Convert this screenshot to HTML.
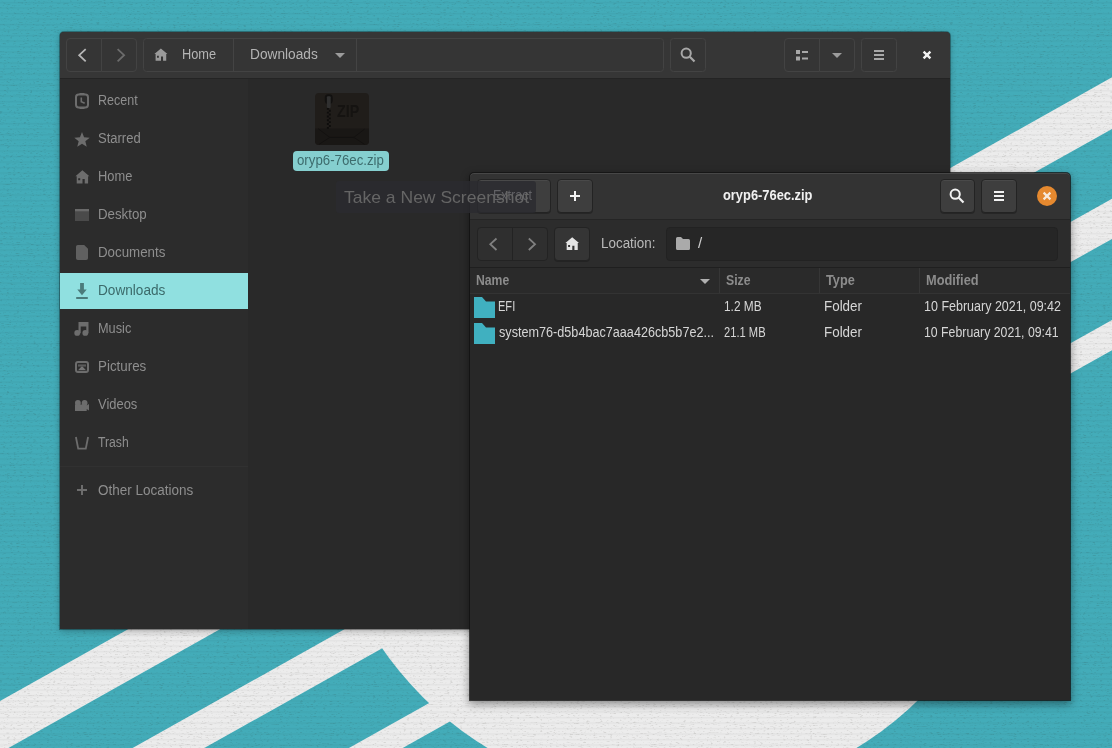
<!DOCTYPE html>
<html lang="en">
<head>
<meta charset="utf-8">
<title>Files - Downloads</title>
<style>
*{box-sizing:border-box;margin:0;padding:0}
html,body{width:1112px;height:748px;overflow:hidden;background:#42abb8;font-family:"Liberation Sans",sans-serif;font-size:14px}
.abs,.tx,.btn,.ic{position:absolute}
.tx{white-space:nowrap;line-height:1;transform-origin:0 0;font-size:14px}
#wall{position:absolute;left:0;top:0}
.win{position:absolute;overflow:hidden}
.pg{position:absolute;width:1112px;height:748px}
#w1{left:60px;top:32px;width:890px;height:597px;border-radius:4px 4px 0 0;background:#292929;box-shadow:0 0 0 1px rgba(0,0,0,.3),0 2px 6px rgba(0,0,0,.3)}
#w1 .pg{left:-60px;top:-32px}
#w2{left:470px;top:173px;width:600px;height:527px;border-radius:4px 4px 0 0;background:#282828;box-shadow:0 0 0 1px rgba(18,18,18,.75),0 3px 9px 1px rgba(0,0,0,.42)}
#w2 .pg{left:-470px;top:-173px}
.hb1{left:60px;top:32px;width:890px;height:46px;background:#363636}
.hl1{left:60px;top:78px;width:890px;height:1px;background:#242424}
.side{left:60px;top:79px;width:188px;height:550px;background:#2c2c2c}
.b1{border:1px solid #434343;border-radius:3.5px;background:#353535}
.sel{left:60px;top:273px;width:188px;height:36px;background:#90e0e0}
.sb{color:#8e8e8e}
.hb2{left:470px;top:173px;width:600px;height:46px;background:#333333;box-shadow:inset 0 1px 0 rgba(255,255,255,.1);border-radius:4px 4px 0 0}
.hl2{left:470px;top:219px;width:600px;height:1px;background:#252525}
.tb2{left:470px;top:220px;width:600px;height:47px;background:#2c2c2c}
.b2{border:1px solid #232323;border-radius:4px;background:#3e3e3e;box-shadow:inset 0 1px 0 rgba(255,255,255,.06),0 1px 0 rgba(0,0,0,.25)}
.b3{border:1px solid #232323;border-radius:4px;background:#2f2f2f}
svg{display:block;overflow:visible}
</style>
</head>
<body>
<svg id="wall" width="1112" height="748" viewBox="0 0 1112 748">
  <defs>
    <filter id="tex" x="0" y="0" width="100%" height="100%" color-interpolation-filters="sRGB">
      <feTurbulence type="fractalNoise" baseFrequency="0.3 0.9" numOctaves="2" seed="7"/>
      <feColorMatrix type="matrix" values="0 0 0 0 0.16  0 0 0 0 0.14  0 0 0 0 0.10  0 0 0 -4 1.7"/>
    </filter>
    <pattern id="rows" width="1112" height="5.500" patternUnits="userSpaceOnUse">
      <rect y="2" width="1112" height="1.200" fill="#1a1a10" opacity=".05"/>
    </pattern>
  </defs>
  <rect width="1112" height="748" fill="#43acb9"/>
  <g fill="#ececec">
    <circle cx="672" cy="447.600" r="352.600"/>
    <polygon points="1112,77.300 1112,129 0,752.700 0,701"/>
    <polygon points="1112,198.700 1112,238.900 0,862.600 0,822.400"/>
    <polygon points="1112,320 1112,350.200 0,973.900 0,943.700"/>
  </g>
  <rect width="1112" height="748" fill="url(#rows)"/>
  <rect width="1112" height="748" filter="url(#tex)" opacity=".11"/>
</svg>

<!-- ================= Files window ================= -->
<div class="win" id="w1"><div class="pg">
  <div class="abs hb1"></div><div class="abs hl1"></div>
  <div class="abs side"></div>

  <!-- nav buttons -->
  <div class="btn b1" style="left:66px;top:38px;width:36px;height:34px;border-radius:4px 0 0 4px"></div>
  <div class="btn b1" style="left:101px;top:38px;width:36px;height:34px;border-radius:0 4px 4px 0"></div>
  <svg class="ic" style="left:76px;top:47px" width="14" height="16" viewBox="0 0 14 16"><path d="M9.700 2.200 3.200 8.200 9.700 14.300" fill="none" stroke="#b6b6b6" stroke-width="1.800"/></svg>
  <svg class="ic" style="left:113px;top:47px" width="14" height="16" viewBox="0 0 14 16"><path d="M4.600 2.200 11.100 8.200 4.600 14.300" fill="none" stroke="#6c6c6c" stroke-width="1.800"/></svg>

  <!-- path bar -->
  <div class="btn b1" style="left:143px;top:38px;width:521px;height:34px"></div>
  <div class="abs" style="left:233px;top:39px;width:1px;height:32px;background:#444"></div>
  <div class="abs" style="left:356px;top:39px;width:1px;height:32px;background:#444"></div>
  <svg class="ic" style="left:153.500px;top:47.700px" width="14" height="13.500" viewBox="0 0 15 14"><path fill-rule="evenodd" d="M7.400.2l7 6h-1.300v7.300H9.700V8.900H7.500v4.600H1.700V6.200H.4zM3.200 8.200v2h2v-2z" fill="#9a9a9a"/></svg>
  <span class="tx" style="left:181.8px;top:46.9px;color:#b4b4b4;transform:scaleX(0.9128)">Home</span>
  <span class="tx" style="left:249.5px;top:46.9px;color:#b4b4b4;transform:scaleX(0.9788)">Downloads</span>
  <svg class="ic" style="left:335px;top:53px" width="10" height="5" viewBox="0 0 10 5"><path d="M0 0h10L5 5z" fill="#9c9c9c"/></svg>

  <!-- search -->
  <div class="btn b1" style="left:670px;top:38px;width:36px;height:34px"></div>
  <svg class="ic" style="left:680.400px;top:47.300px" width="16" height="16" viewBox="0 0 16 16"><circle cx="6.2" cy="6.2" r="4.6" fill="none" stroke="#a8a8a8" stroke-width="2"/><path d="M9.8 9.8 14.5 14.5" stroke="#a8a8a8" stroke-width="2.2"/></svg>

  <!-- view -->
  <div class="btn b1" style="left:784px;top:38px;width:36px;height:34px;border-radius:4px 0 0 4px"></div>
  <div class="btn b1" style="left:819px;top:38px;width:36px;height:34px;border-radius:0 4px 4px 0"></div>
  <svg class="ic" style="left:796px;top:49.800px" width="12" height="11" viewBox="0 0 12 11"><path d="M0 0h4v4H0zM6 1h6v2H6zM0 6.500h4v4H0zM6 7.500h6v2H6z" fill="#a8a8a8"/></svg>
  <svg class="ic" style="left:832px;top:53px" width="10" height="5" viewBox="0 0 10 5"><path d="M0 0h10L5 5z" fill="#9c9c9c"/></svg>

  <!-- menu -->
  <div class="btn b1" style="left:861px;top:38px;width:36px;height:34px"></div>
  <svg class="ic" style="left:874px;top:50px" width="10" height="10" viewBox="0 0 10 10"><path d="M0 0h10v2H0zM0 4h10v2H0zM0 8h10v2H0z" fill="#a8a8a8"/></svg>

  <!-- close -->
  <svg class="ic" style="left:922.300px;top:50.400px" width="10" height="10" viewBox="0 0 10 10"><path d="M1.600 1.600 8.400 8.400M8.400 1.600 1.600 8.400" stroke="#f2f2f2" stroke-width="2.400"/></svg>

  <!-- sidebar -->
  <div class="abs sel"></div>
  <div class="abs" style="left:60px;top:466px;width:188px;height:1px;background:#313131"></div>


  <!-- sidebar icons -->
  <svg class="ic" style="left:74px;top:92px" width="16" height="18" viewBox="0 0 16 18" fill="none" stroke="#6d6d6d">
    <rect x="2" y="2.600" width="12" height="12.800" rx="2.600" stroke-width="2"/><path d="M5.500 1.700h5M5.500 16.300h5" stroke-width="1.400"/><path d="M7.300 5.400v4.300l3.400 1.500" stroke-width="1.600"/></svg>
  <svg class="ic" style="left:74px;top:132px" width="16" height="15" viewBox="0 0 16 15"><path d="M8 0l2.050 5.300 5.650.35-4.380 3.600 1.430 5.500L8 11.700l-4.750 3.050 1.430-5.500L.3 5.650l5.650-.35z" fill="#6d6d6d"/></svg>
  <svg class="ic" style="left:75px;top:169.500px" width="15" height="14" viewBox="0 0 15 14"><path fill-rule="evenodd" d="M7.400.2l7 6h-1.300v7.300H9.700V8.900H7.500v4.600H1.700V6.200H.4zM3.200 8.200v2h2v-2z" fill="#6d6d6d"/></svg>
  <svg class="ic" style="left:75px;top:209px" width="14" height="12" viewBox="0 0 14 12"><rect width="14" height="12" fill="#4a4a4a"/><rect width="14" height="2.300" fill="#6a6a6a"/></svg>
  <svg class="ic" style="left:76px;top:245px" width="12" height="15" viewBox="0 0 12 15"><path d="M1.800 0h6.400L12 3.800v9.400a1.800 1.800 0 0 1-1.800 1.800H1.800A1.800 1.800 0 0 1 0 13.200V1.800A1.800 1.800 0 0 1 1.800 0z" fill="#606060"/></svg>
  <svg class="ic" style="left:76px;top:283px" width="12" height="16" viewBox="0 0 12 16"><path d="M4.100 0h3.800v6.400h2.800L6 12.200 1.300 6.400h2.800zM.2 13.900h11.600V16H.2z" fill="#4b7b7b"/></svg>
  <svg class="ic" style="left:74px;top:321.700px" width="15" height="14" viewBox="0 0 15 14"><path d="M4.500 0h10v11.200h-2.200V4.400H6.700v6.800H4.500z" fill="#6d6d6d"/><circle cx="3.200" cy="10.900" r="2.900" fill="#6d6d6d"/><circle cx="11.300" cy="10.900" r="2.900" fill="#6d6d6d"/></svg>
  <svg class="ic" style="left:75px;top:361px" width="14" height="12" viewBox="0 0 14 12"><rect x="1" y="1" width="12" height="10" rx="2" fill="none" stroke="#6d6d6d" stroke-width="2"/><path d="M3 9.200l4-4.200 4 4.200z" fill="#757575"/><path d="M3 3.400h8v2.200H3z" fill="#5a5a5a"/></svg>
  <svg class="ic" style="left:75px;top:400px" width="14" height="11" viewBox="0 0 14 11"><circle cx="2.900" cy="2.900" r="2.900" fill="#6d6d6d"/><circle cx="9.600" cy="2.900" r="2.900" fill="#6d6d6d"/><path d="M0 4.600h11.700v1L14 4v6.600l-2.300-1.600V11H0z" fill="#6d6d6d"/></svg>
  <svg class="ic" style="left:75px;top:437px" width="14" height="13" viewBox="0 0 14 13"><path d="M.9 0l2.300 11.700h7.600L13.100 0" fill="none" stroke="#6d6d6d" stroke-width="1.800"/></svg>
  <svg class="ic" style="left:77px;top:485px" width="10" height="10" viewBox="0 0 10 10"><path d="M5 0v10M0 5h10" stroke="#6d6d6d" stroke-width="2"/></svg>

  <span class="tx sb" style="left:97.7px;top:93.2px;transform:scaleX(0.8950)">Recent</span>
  <span class="tx sb" style="left:97.7px;top:131.2px;transform:scaleX(0.9298)">Starred</span>
  <span class="tx sb" style="left:97.7px;top:169.2px;transform:scaleX(0.9181)">Home</span>
  <span class="tx sb" style="left:97.7px;top:207.2px;transform:scaleX(0.9482)">Desktop</span>
  <span class="tx sb" style="left:97.7px;top:245.2px;transform:scaleX(0.9518)">Documents</span>
  <span class="tx" style="left:97.7px;top:283.2px;color:#3b6a6a;transform:scaleX(0.9731)">Downloads</span>
  <span class="tx sb" style="left:97.7px;top:321.2px;transform:scaleX(0.9108)">Music</span>
  <span class="tx sb" style="left:97.7px;top:359.2px;transform:scaleX(0.9550)">Pictures</span>
  <span class="tx sb" style="left:97.7px;top:397.2px;transform:scaleX(0.9233)">Videos</span>
  <span class="tx sb" style="left:97.7px;top:435.2px;transform:scaleX(0.8702)">Trash</span>
  <span class="tx sb" style="left:97.7px;top:482.5px;transform:scaleX(0.9641)">Other Locations</span>

  <!-- file -->
  <svg class="ic" style="left:315px;top:93px" width="54" height="52" viewBox="0 0 54 52">
    <rect width="54" height="52" rx="4" fill="#201d1a"/>
    <path d="M0 35.600h54V48a4 4 0 0 1-4 4H4a4 4 0 0 1-4-4z" fill="#191715"/>
    <path d="M3.200 35.700l11.600 8.700h24l10.800-8.300M14.800 44.400L4 51.400M38.800 44.400l10.800 7" fill="none" stroke="#131110" stroke-width="1"/>
    <rect x="9.800" y="1.200" width="7.900" height="9.800" rx="3.400" fill="#121110"/>
    <rect x="11.900" y="3.300" width="3.800" height="11.600" rx="1" fill="#303030"/>
    <path d="M11.90 14.90h1.95v1.9h-1.95zM13.85 16.80h1.95v1.9h-1.95zM11.90 18.70h1.95v1.9h-1.95zM13.85 20.60h1.95v1.9h-1.95zM11.90 22.50h1.95v1.9h-1.95zM13.85 24.40h1.95v1.9h-1.95zM11.90 26.30h1.95v1.9h-1.95zM13.85 28.20h1.95v1.9h-1.95zM11.90 30.10h1.95v1.9h-1.95zM13.85 32.00h1.95v1.9h-1.95zM11.90 33.90h1.95v1.9h-1.95z" fill="#0e0d0c"/>
  </svg>
  <span class="tx" style="left:337.0px;top:103.000px;font-size:16.500px;font-weight:700;color:#151311;transform:scaleX(0.8648)">ZIP</span>
  <div class="abs" style="left:293px;top:151px;width:96px;height:20px;border-radius:4px;background:#85cfcf"></div>
  <span class="tx" style="left:296.6px;top:152.900px;color:#3d6c6d;transform:scaleX(0.9463)">oryp6-76ec.zip</span>
</div></div>

<!-- ================= Archive Manager window ================= -->
<div class="win" id="w2"><div class="pg">
  <div class="abs hb2"></div><div class="abs hl2"></div><div class="abs tb2"></div>

  <div class="btn b2" style="left:477px;top:179px;width:74px;height:34px"></div>
  <span class="tx" style="left:493.2px;top:187.800px;color:#626266;z-index:3;transform:scaleX(0.8949)">Extract</span>
  <div class="btn b2" style="left:557px;top:179px;width:36px;height:34px"></div>
  <svg class="ic" style="left:570px;top:191px" width="10" height="10" viewBox="0 0 10 10"><path d="M5 0v10M0 5h10" stroke="#f2f2f2" stroke-width="2"/></svg>

  <span class="tx" style="left:723.2px;top:187.6px;color:#f0f0f0;font-weight:700;transform:scaleX(0.9191)">oryp6-76ec.zip</span>

  <div class="btn b2" style="left:939.500px;top:179px;width:35.500px;height:34px"></div>
  <svg class="ic" style="left:949px;top:188px" width="16" height="16" viewBox="0 0 16 16"><circle cx="6.2" cy="6.2" r="4.6" fill="none" stroke="#f2f2f2" stroke-width="2"/><path d="M9.8 9.8 14.5 14.5" stroke="#f2f2f2" stroke-width="2.2"/></svg>
  <div class="btn b2" style="left:981px;top:179px;width:36px;height:34px"></div>
  <svg class="ic" style="left:994px;top:191px" width="10" height="10" viewBox="0 0 10 10"><path d="M0 0h10v2H0zM0 4h10v2H0zM0 8h10v2H0z" fill="#f2f2f2"/></svg>
  <div class="abs" style="left:1037px;top:186px;width:20px;height:20px;border-radius:50%;background:#e5892f"></div>
  <svg class="ic" style="left:1042px;top:191px" width="10" height="10" viewBox="0 0 10 10"><path d="M1.600 1.600 8.400 8.400M8.400 1.600 1.600 8.400" stroke="#f7e9da" stroke-width="2.200"/></svg>

  <!-- toolbar -->
  <div class="btn b3" style="left:477px;top:227px;width:36px;height:34px;border-radius:4px 0 0 4px"></div>
  <div class="btn b3" style="left:512px;top:227px;width:36px;height:34px;border-radius:0 4px 4px 0"></div>
  <svg class="ic" style="left:487px;top:236px" width="14" height="16" viewBox="0 0 14 16"><path d="M9.500 2.500 3.300 8.200 9.500 14" fill="none" stroke="#808080" stroke-width="1.800"/></svg>
  <svg class="ic" style="left:523.500px;top:236px" width="14" height="16" viewBox="0 0 14 16"><path d="M4.800 2.500 11 8.200 4.800 14" fill="none" stroke="#808080" stroke-width="1.800"/></svg>
  <div class="btn b3" style="left:554px;top:227px;width:36px;height:34px;background:#353535;box-shadow:0 1px 0 rgba(0,0,0,.2)"></div>
  <svg class="ic" style="left:564.800px;top:237px" width="14.600" height="13.600" viewBox="0 0 15 14"><path fill-rule="evenodd" d="M7.400.2l7 6h-1.300v7.300H9.700V8.900H7.500v4.600H1.700V6.200H.4zM3.200 8.200v2h2v-2z" fill="#e4e4e4"/></svg>
  <span class="tx" style="left:600.8px;top:236.1px;color:#bababa;transform:scaleX(0.9590)">Location:</span>
  <div class="btn" style="left:666px;top:227px;width:392px;height:34px;border:1px solid #222;border-radius:4px;background:#262626"></div>
  <svg class="ic" style="left:676px;top:237px" width="14" height="13" viewBox="0 0 14 13"><path d="M0 1.5A1.5 1.5 0 0 1 1.5 0H5l2 2h5.5A1.5 1.5 0 0 1 14 3.500V11.500A1.500 1.500 0 0 1 12.500 13H1.500A1.500 1.500 0 0 1 0 11.500z" fill="#aaaaaa"/></svg>
  <span class="tx" style="left:697.9px;top:236.1px;color:#d0d0d0;transform:scaleX(1.0795)">/</span>

  <!-- list header -->
  <div class="abs" style="left:470px;top:267px;width:600px;height:1px;background:#1f1f1f"></div>
  <div class="abs" style="left:470px;top:268px;width:600px;height:25px;background:#2a2a2a"></div>
  <div class="abs" style="left:470px;top:293px;width:600px;height:1px;background:#333"></div>
  <div class="abs" style="left:719px;top:268px;width:1px;height:25px;background:#363636"></div>
  <div class="abs" style="left:819px;top:268px;width:1px;height:25px;background:#363636"></div>
  <div class="abs" style="left:919px;top:268px;width:1px;height:25px;background:#363636"></div>
  <span class="tx" style="left:475.5px;top:273.1px;color:#8c8c8c;font-weight:700;transform:scaleX(0.8705)">Name</span>
  <span class="tx" style="left:726.2px;top:273.1px;color:#8c8c8c;font-weight:700;transform:scaleX(0.8745)">Size</span>
  <span class="tx" style="left:826.3px;top:273.1px;color:#8c8c8c;font-weight:700;transform:scaleX(0.9071)">Type</span>
  <span class="tx" style="left:925.7px;top:273.1px;color:#8c8c8c;font-weight:700;transform:scaleX(0.9140)">Modified</span>
  <svg class="ic" style="left:700px;top:279px" width="10" height="5" viewBox="0 0 10 5"><path d="M0 0h10L5 5z" fill="#b0b0b0"/></svg>

  <!-- rows -->
  <svg class="ic" style="left:473.500px;top:296.500px" width="21" height="21" viewBox="0 0 21 21"><path d="M0 0h8l4 4.500h9V21H0z" fill="#40b0c0"/></svg>
  <svg class="ic" style="left:473.500px;top:322.500px" width="21" height="21" viewBox="0 0 21 21"><path d="M0 0h8l4 4.500h9V21H0z" fill="#40b0c0"/></svg>
  <span class="tx" style="left:498.4px;top:298.8px;color:#d6d6d6;transform:scaleX(0.7897)">EFI</span>
  <span class="tx" style="left:498.8px;top:324.8px;color:#d6d6d6;transform:scaleX(0.9027)">system76-d5b4bac7aaa426cb5b7e2...</span>
  <span class="tx" style="left:724.2px;top:298.8px;color:#d6d6d6;transform:scaleX(0.8476)">1.2 MB</span>
  <span class="tx" style="left:724.2px;top:324.8px;color:#d6d6d6;transform:scaleX(0.7978)">21.1 MB</span>
  <span class="tx" style="left:823.9px;top:298.8px;color:#d6d6d6;transform:scaleX(0.9575)">Folder</span>
  <span class="tx" style="left:823.9px;top:324.8px;color:#d6d6d6;transform:scaleX(0.9575)">Folder</span>
  <span class="tx" style="left:923.7px;top:298.8px;color:#d6d6d6;transform:scaleX(0.8934)">10 February 2021, 09:42</span>
  <span class="tx" style="left:923.7px;top:324.8px;color:#d6d6d6;transform:scaleX(0.8784)">10 February 2021, 09:41</span>
</div></div>

<!-- tooltip -->
<div class="abs" id="tip" style="left:336px;top:181px;width:200px;height:32px;border-radius:3px;background:rgba(42,42,47,.8);z-index:2"></div>
<span class="tx" style="left:344.0px;top:189.300px;font-size:17px;color:#656565;z-index:4;transform:scaleX(1.0304)">Take a New Screenshot</span>
</body>
</html>
